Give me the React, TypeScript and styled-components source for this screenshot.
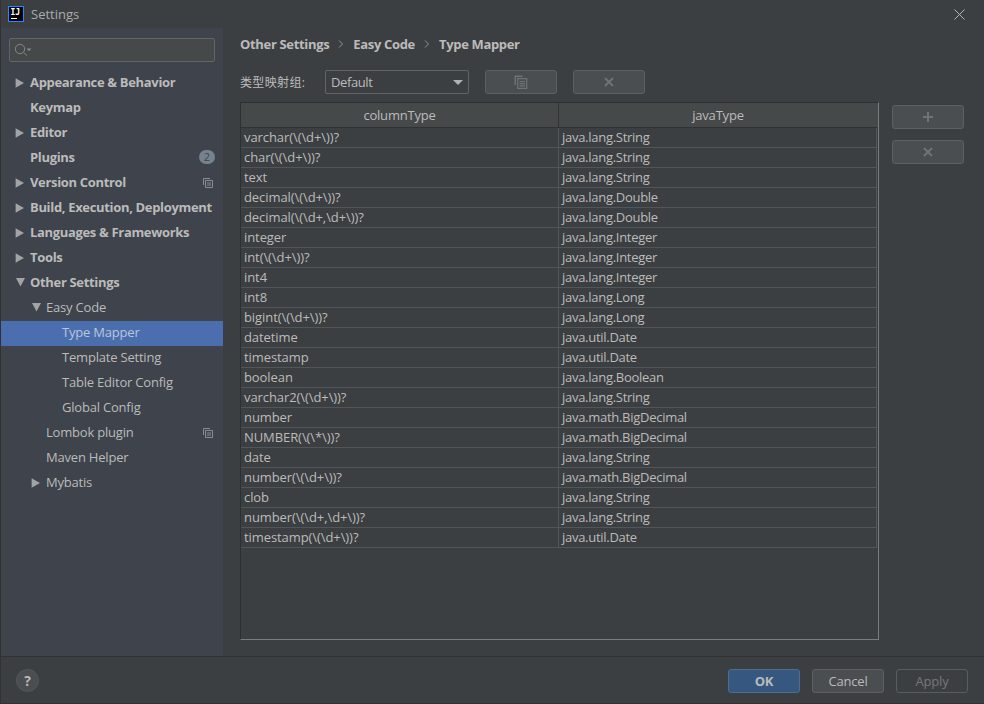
import React from "react";
import styled, { createGlobalStyle } from "styled-components";

const Global = createGlobalStyle`
  html, body { margin: 0; padding: 0; background: #3c3f41; }
  * { box-sizing: border-box; }
`;

const FONT = `"Open Sans", "Noto Sans CJK SC", sans-serif`;

const Window = styled.div`
  width: 984px;
  height: 704px;
  background: #3c3f41;
  border: 1px solid #323232;
  border-top: 0;
  border-right: 0;
  color: #bbbbbb;
  font-family: ${FONT};
  font-size: 13px;
  letter-spacing: -0.3px;
  display: grid;
  grid-template-rows: 28px 628px 48px;
  overflow: hidden;
`;

const TitleBar = styled.header`
  display: flex;
  align-items: center;
  padding: 0 19px 0 7px;
  gap: 7px;
  font-size: 13px;
  color: #a8adb0;
  letter-spacing: 0;
`;

const TitleText = styled.span`
  flex: 1;
  line-height: 28px;
`;

const Logo = styled.svg`
  width: 16px;
  height: 16px;
  display: block;
`;

const LogoText = styled.text`
  font-family: "DejaVu Sans Mono", monospace;
  font-size: 8px;
  font-weight: 700;
  fill: #ffffff;
  letter-spacing: 0;
`;

const CloseIcon = styled.svg`
  width: 11px;
  height: 11px;
  display: block;
`;

const Body = styled.div`
  display: grid;
  grid-template-columns: 222px 1fr;
  min-height: 0;
`;

const Sidebar = styled.nav`
  background: #3e434c;
  padding: 10px 0 0;
`;

const SearchField = styled.div`
  height: 24px;
  margin: 0 8px 9px;
  width: 206px;
  background: #45494a;
  border: 1px solid #646464;
  border-radius: 2px;
  display: flex;
  align-items: center;
  padding-left: 5px;
`;

const Row = styled.div<{ $level: number; $selected?: boolean; $bold?: boolean }>`
  height: 25px;
  display: flex;
  align-items: center;
  position: relative;
  padding-left: ${(p) => 29 + p.$level * 16}px;
  padding-right: 8px;
  padding-bottom: 4px;
  background: ${(p) => (p.$selected ? "#4b6eaf" : "transparent")};
  color: ${(p) => (p.$selected ? "#bbc5da" : "#bbbbbb")};
  font-weight: ${(p) => (p.$bold ? 700 : 400)};
  font-size: 13px;
  letter-spacing: ${(p) => (p.$bold ? "-0.33px" : "-0.2px")};
`;

const RowLabel = styled.span`
  flex: 1;
  white-space: nowrap;
`;

const Arrow = styled.svg<{ $level: number }>`
  position: absolute;
  left: ${(p) => 14 + p.$level * 16}px;
  top: 7px;
  width: 10px;
  height: 10px;
  fill: #a0a4a7;
`;

const Badge = styled.span`
  width: 16px;
  height: 14px;
  border-radius: 7px;
  background: #76838f;
  color: #3e434c;
  font-size: 11px;
  font-weight: 400;
  letter-spacing: 0;
  display: flex;
  align-items: center;
  justify-content: center;
`;

const CopyMark = styled.svg`
  width: 10px;
  height: 10px;
  margin: 2px 2px 0 0;
  fill: none;
  stroke: #8a8e91;
`;

const Main = styled.main`
  padding: 0 19px 0 17px;
  display: flex;
  flex-direction: column;
`;

const Breadcrumbs = styled.div`
  height: 42px;
  padding-bottom: 10px;
  display: flex;
  align-items: center;
  font-weight: 700;
  font-size: 13px;
  letter-spacing: -0.33px;
  color: #bbbbbb;
`;

const Chevron = styled.svg`
  width: 6px;
  height: 8px;
  margin: 0 9px;
  fill: none;
  stroke: #8f9396;
`;

const GroupBar = styled.div`
  height: 24px;
  display: flex;
  align-items: center;
  margin-bottom: 8px;
`;

const GroupLabel = styled.label`
  width: 85px;
  font-size: 12px;
  letter-spacing: 0.35px;
  white-space: nowrap;
`;

const Combo = styled.div`
  width: 144px;
  height: 24px;
  border: 1px solid #646464;
  border-radius: 2px;
  display: flex;
  align-items: center;
  justify-content: space-between;
  padding: 0 6px 0 5px;
  margin-right: 16px;
  letter-spacing: -0.4px;
`;

const Caret = styled.i`
  width: 0;
  height: 0;
  border-left: 5px solid transparent;
  border-right: 5px solid transparent;
  border-top: 5px solid #b0b3b5;
  margin-right: -1px;
`;

const Button = styled.button<{ $variant?: "default" | "primary" | "ghost" | "muted" }>`
  width: 72px;
  height: 24px;
  padding: 0;
  border-radius: 3px;
  display: flex;
  align-items: center;
  justify-content: center;
  font-family: ${FONT};
  font-size: 13px;
  letter-spacing: -0.2px;
  border: 1px solid ${(p) =>
    p.$variant === "primary" ? "#4c708c" : p.$variant === "ghost" ? "#5a5d5f" : "#5e6060"};
  background: ${(p) =>
    p.$variant === "primary"
      ? "#365880"
      : p.$variant === "ghost"
      ? "transparent"
      : "#4a4e50"};
  color: ${(p) =>
    p.$variant === "primary" ? "#bbbbbb" : p.$variant === "ghost" ? "#777777" : "#bbbbbb"};
  font-weight: ${(p) => (p.$variant === "primary" ? 700 : 400)};
`;

const ToolIcon = styled.svg`
  width: 14px;
  height: 14px;
  display: block;
  stroke: #6f7376;
  fill: none;
`;

const GroupGap = styled.span`
  width: 16px;
`;

const Workspace = styled.div`
  display: flex;
  gap: 13px;
  align-items: flex-start;
`;

const TablePane = styled.div`
  width: 639px;
  height: 538px;
  border: 1px solid;
  border-color: #2e2f30 #7a7d7f #7a7d7f #2e2f30;
`;

const TableGrid = styled.div`
  display: grid;
  grid-template-columns: 318px 318px;
  width: 636px;
`;

const HeaderCell = styled.div<{ $last?: boolean }>`
  height: 25px;
  background: #45494a;
  border-bottom: 1px solid #323232;
  border-right: 1px solid ${(p) => (p.$last ? "transparent" : "#323232")};
  margin-right: ${(p) => (p.$last ? "-1px" : "0")};
  display: flex;
  align-items: center;
  justify-content: center;
  font-size: 13px;
  letter-spacing: -0.2px;
`;

const Cell = styled.div<{ $last?: boolean }>`
  height: 20px;
  border-bottom: 1px solid #515658;
  border-right: 1px solid #515658;
  padding-left: 3px;
  padding-bottom: 2px;
  display: flex;
  align-items: center;
  font-size: 13px;
  white-space: nowrap;
  letter-spacing: ${(p) => (p.$last ? "-0.28px" : "-0.08px")};
`;

const SideButtons = styled.div`
  display: flex;
  flex-direction: column;
  gap: 11px;
  padding-top: 3px;
`;

const Footer = styled.footer`
  border-top: 1px solid #323232;
  display: flex;
  align-items: center;
  gap: 12px;
  padding: 0 16px 0 15px;
`;

const Help = styled.div`
  width: 23px;
  height: 23px;
  border-radius: 50%;
  background: #4a4e50;
  border: 1px solid #555859;
  color: #b8b8b8;
  font-weight: 700;
  font-size: 14px;
  display: flex;
  align-items: center;
  justify-content: center;
  margin-right: auto;
`;

const arrowRight = "M0.6 0.3 L9 5 L0.6 9.7 Z";
const arrowDown = "M1 0 L10 0 L5.5 8.5 Z";

const ExpandArrow = ({ level, open }: { level: number; open?: boolean }) => (
  <Arrow $level={level} viewBox="0 0 10 10">
    <path d={open ? arrowDown : arrowRight} />
  </Arrow>
);

const CopyGlyph = () => (
  <CopyMark viewBox="0 0 10 10">
    <path d="M.5 7V.5H7M2.5 2.5h7v7h-7zM4 5h4M4 7h4" />
  </CopyMark>
);

type Item = {
  label: string;
  level: number;
  bold?: boolean;
  arrow?: "open" | "closed";
  selected?: boolean;
  badge?: string;
  copy?: boolean;
};

const items: Item[] = [
  { label: "Appearance & Behavior", level: 0, bold: true, arrow: "closed" },
  { label: "Keymap", level: 0, bold: true },
  { label: "Editor", level: 0, bold: true, arrow: "closed" },
  { label: "Plugins", level: 0, bold: true, badge: "2" },
  { label: "Version Control", level: 0, bold: true, arrow: "closed", copy: true },
  { label: "Build, Execution, Deployment", level: 0, bold: true, arrow: "closed" },
  { label: "Languages & Frameworks", level: 0, bold: true, arrow: "closed" },
  { label: "Tools", level: 0, bold: true, arrow: "closed" },
  { label: "Other Settings", level: 0, bold: true, arrow: "open" },
  { label: "Easy Code", level: 1, arrow: "open" },
  { label: "Type Mapper", level: 2, selected: true },
  { label: "Template Setting", level: 2 },
  { label: "Table Editor Config", level: 2 },
  { label: "Global Config", level: 2 },
  { label: "Lombok plugin", level: 1, copy: true },
  { label: "Maven Helper", level: 1 },
  { label: "Mybatis", level: 1, arrow: "closed" },
];

const mappings: [string, string][] = [
  ["varchar(\\(\\d+\\))?", "java.lang.String"],
  ["char(\\(\\d+\\))?", "java.lang.String"],
  ["text", "java.lang.String"],
  ["decimal(\\(\\d+\\))?", "java.lang.Double"],
  ["decimal(\\(\\d+,\\d+\\))?", "java.lang.Double"],
  ["integer", "java.lang.Integer"],
  ["int(\\(\\d+\\))?", "java.lang.Integer"],
  ["int4", "java.lang.Integer"],
  ["int8", "java.lang.Long"],
  ["bigint(\\(\\d+\\))?", "java.lang.Long"],
  ["datetime", "java.util.Date"],
  ["timestamp", "java.util.Date"],
  ["boolean", "java.lang.Boolean"],
  ["varchar2(\\(\\d+\\))?", "java.lang.String"],
  ["number", "java.math.BigDecimal"],
  ["NUMBER(\\(\\*\\))?", "java.math.BigDecimal"],
  ["date", "java.lang.String"],
  ["number(\\(\\d+\\))?", "java.math.BigDecimal"],
  ["clob", "java.lang.String"],
  ["number(\\(\\d+,\\d+\\))?", "java.lang.String"],
  ["timestamp(\\(\\d+\\))?", "java.util.Date"],
];

export default function App() {
  return (
    <Window>
      <Global />
      <TitleBar>
        <Logo viewBox="0 0 16 16">
          <rect x="0.5" y="0.5" width="15" height="15" fill="#000" stroke="#1a8cff" />
          <LogoText x="2.5" y="9">IJ</LogoText>
          <path d="M3 12.5h6" stroke="#fff" strokeWidth="1" fill="none" />
        </Logo>
        <TitleText>Settings</TitleText>
        <CloseIcon viewBox="0 0 11 11">
          <path d="M.5.5l10 10M10.5.5l-10 10" stroke="#b4b7b9" strokeWidth="1" fill="none" />
        </CloseIcon>
      </TitleBar>
      <Body>
        <Sidebar>
          <SearchField>
            <svg width="18" height="14" viewBox="0 0 18 14" fill="none" stroke="#85898b">
              <circle cx="5" cy="6" r="4.7" />
              <path d="M8.5 9.5l3.5 3" />
              <path d="M11.5 5.5h5l-2.5 2.8z" fill="#85898b" stroke="none" />
            </svg>
          </SearchField>
          {items.map((it) => (
            <Row key={it.label} $level={it.level} $bold={it.bold} $selected={it.selected}>
              {it.arrow && <ExpandArrow level={it.level} open={it.arrow === "open"} />}
              <RowLabel>{it.label}</RowLabel>
              {it.badge && <Badge>{it.badge}</Badge>}
              {it.copy && <CopyGlyph />}
            </Row>
          ))}
        </Sidebar>
        <Main>
          <Breadcrumbs>
            <span>Other Settings</span>
            <Chevron viewBox="0 0 6 8"><path d="M1 .5L4.5 4 1 7.5" /></Chevron>
            <span>Easy Code</span>
            <Chevron viewBox="0 0 6 8"><path d="M1 .5L4.5 4 1 7.5" /></Chevron>
            <span>Type Mapper</span>
          </Breadcrumbs>
          <GroupBar>
            <GroupLabel>类型映射组:</GroupLabel>
            <Combo>
              <span>Default</span>
              <Caret />
            </Combo>
            <Button $variant="muted" aria-label="Copy">
              <ToolIcon viewBox="0 0 14 14">
                <path d="M1.2 10V1.2h7.3" strokeWidth="1.4" />
                <path d="M3.7 3.7h9v9.6h-9z" strokeWidth="1.2" />
                <path d="M5.5 6.5h5.5M5.5 8.7h5.5M5.5 10.9h5.5" strokeWidth="1.2" />
              </ToolIcon>
            </Button>
            <GroupGap />
            <Button $variant="muted" aria-label="Delete">
              <ToolIcon viewBox="0 0 14 14">
                <path d="M3 3l8 8M11 3l-8 8" strokeWidth="2" />
              </ToolIcon>
            </Button>
          </GroupBar>
          <Workspace>
            <TablePane>
              <TableGrid>
                <HeaderCell>columnType</HeaderCell>
                <HeaderCell $last>javaType</HeaderCell>
                {mappings.map(([c, j], i) => (
                  <React.Fragment key={i}>
                    <Cell>{c}</Cell>
                    <Cell $last>{j}</Cell>
                  </React.Fragment>
                ))}
              </TableGrid>
            </TablePane>
            <SideButtons>
              <Button $variant="muted" aria-label="Add">
                <ToolIcon viewBox="0 0 14 14">
                  <path d="M7 2v10M2 7h10" strokeWidth="2" />
                </ToolIcon>
              </Button>
              <Button $variant="muted" aria-label="Remove">
                <ToolIcon viewBox="0 0 14 14">
                  <path d="M3 3l8 8M11 3l-8 8" strokeWidth="2" />
                </ToolIcon>
              </Button>
            </SideButtons>
          </Workspace>
        </Main>
      </Body>
      <Footer>
        <Help>?</Help>
        <Button $variant="primary">OK</Button>
        <Button>Cancel</Button>
        <Button $variant="ghost">Apply</Button>
      </Footer>
    </Window>
  );
}
